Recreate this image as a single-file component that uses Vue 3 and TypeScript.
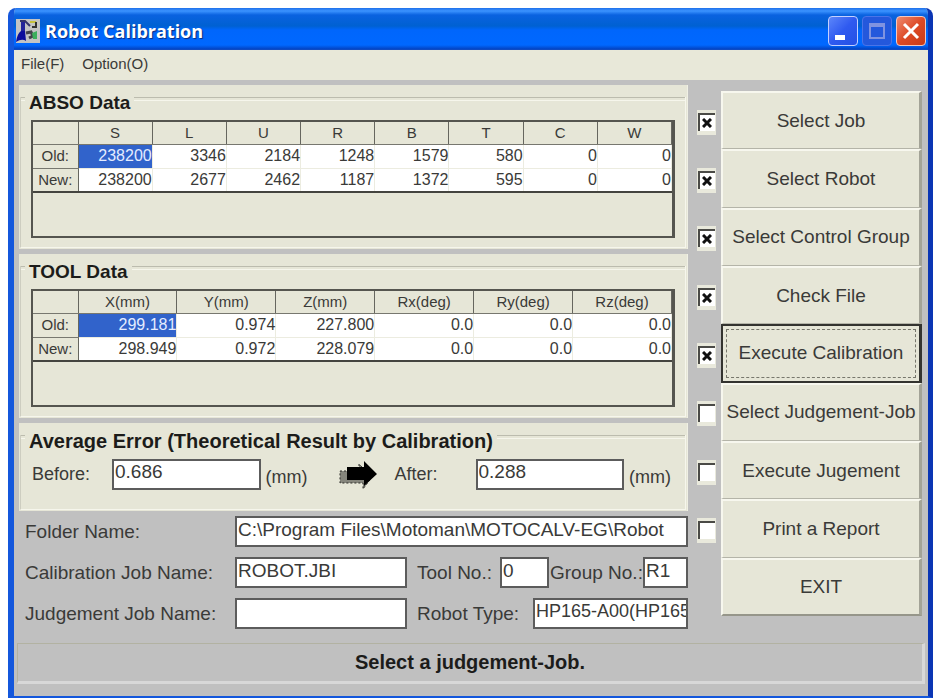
<script setup lang="ts">
import { reactive, ref } from 'vue'

interface DataGrid {
  title: string
  columns: string[]
  rows: { name: string; values: string[] }[]
}

interface Step {
  id: string
  label: string
  done?: boolean
}

const menus = ['File(F)', 'Option(O)']

const grids: DataGrid[] = [
  {
    title: 'ABSO Data',
    columns: ['S', 'L', 'U', 'R', 'B', 'T', 'C', 'W'],
    rows: [
      { name: 'Old:', values: ['238200', '3346', '2184', '1248', '1579', '580', '0', '0'] },
      { name: 'New:', values: ['238200', '2677', '2462', '1187', '1372', '595', '0', '0'] },
    ],
  },
  {
    title: 'TOOL Data',
    columns: ['X(mm)', 'Y(mm)', 'Z(mm)', 'Rx(deg)', 'Ry(deg)', 'Rz(deg)'],
    rows: [
      { name: 'Old:', values: ['299.181', '0.974', '227.800', '0.0', '0.0', '0.0'] },
      { name: 'New:', values: ['298.949', '0.972', '228.079', '0.0', '0.0', '0.0'] },
    ],
  },
]

const steps = reactive<Step[]>([
  { id: 'select-job', label: 'Select Job', done: true },
  { id: 'select-robot', label: 'Select Robot', done: true },
  { id: 'select-group', label: 'Select Control Group', done: true },
  { id: 'check-file', label: 'Check File', done: true },
  { id: 'execute-calibration', label: 'Execute Calibration', done: true },
  { id: 'select-judgement', label: 'Select Judgement-Job', done: false },
  { id: 'execute-judgement', label: 'Execute Jugement', done: false },
  { id: 'print-report', label: 'Print a Report', done: false },
  { id: 'exit', label: 'EXIT' },
])

const current = ref('execute-calibration')

const form = reactive({
  before: '0.686',
  after: '0.288',
  folder: 'C:\\Program Files\\Motoman\\MOTOCALV-EG\\Robot',
  job: 'ROBOT.JBI',
  judgement: '',
  tool: '0',
  group: 'R1',
  robot: 'HP165-A00(HP165-A00)',
})
</script>

<template>
  <div class="window">
    <header class="titlebar">
      <svg class="app-icon" viewBox="0 0 24 24" aria-hidden="true">
        <rect width="24" height="24" fill="#c4c4c4" />
        <path d="M7 3 V14" fill="none" stroke="#23239a" stroke-width="4" />
        <path d="M0 23 Q1 15 5 12 H9 L10 22 Q6 19 0 23 Z" fill="#0d0d9c" />
        <path d="M4 2 H9 L14 7" fill="none" stroke="#34346c" stroke-width="2" />
        <path d="M14 3 H20" stroke="#c6c03c" stroke-width="2" />
        <path d="M20 3 V8 H16" fill="none" stroke="#333" stroke-width="2" />
        <path d="M10 14 L15 13 L17 17 L13 19" fill="none" stroke="#44444c" stroke-width="3" />
        <path d="M16 14 L21 12 V20 H17 Z" fill="#3cae5c" />
      </svg>
      <h1>Robot Calibration</h1>
      <div class="caption-buttons">
        <button type="button" class="caption minimize" aria-label="Minimize">
          <svg viewBox="0 0 28 28"><rect x="6" y="18" width="10" height="5" fill="#fff" /></svg>
        </button>
        <button type="button" class="caption maximize" aria-label="Maximize">
          <svg viewBox="0 0 28 28">
            <path d="M7 8 H21 V21 H7 Z" fill="none" stroke="#8093e0" stroke-width="2" />
            <path d="M6 8 H22" stroke="#8093e0" stroke-width="4" />
          </svg>
        </button>
        <button type="button" class="caption close" aria-label="Close">
          <svg viewBox="0 0 28 28">
            <path d="M7 7 L21 21 M21 7 L7 21" fill="none" stroke="#fff" stroke-width="3" />
          </svg>
        </button>
      </div>
    </header>

    <nav class="menubar">
      <button v-for="menu in menus" :key="menu" type="button">{{ menu }}</button>
    </nav>

    <main class="client">
      <div class="workspace">
        <div class="panels">
          <section v-for="grid in grids" :key="grid.title" class="panel">
            <div class="frame">
              <h2>{{ grid.title }}</h2>
              <div class="sheet">
                <table>
                  <colgroup>
                    <col class="name-col" />
                    <col v-for="column in grid.columns" :key="column" />
                  </colgroup>
                  <thead>
                    <tr>
                      <th></th>
                      <th v-for="column in grid.columns" :key="column" scope="col">{{ column }}</th>
                    </tr>
                  </thead>
                  <tbody>
                    <tr v-for="(row, r) in grid.rows" :key="row.name">
                      <th scope="row">{{ row.name }}</th>
                      <td
                        v-for="(value, c) in row.values"
                        :key="c"
                        :class="{ selected: r === 0 && c === 0 }"
                      >{{ value }}</td>
                    </tr>
                  </tbody>
                </table>
              </div>
            </div>
          </section>

          <section class="panel">
            <div class="frame">
              <h2 class="long">Average Error (Theoretical Result by Calibration)</h2>
              <div class="errors">
                <label for="before" class="before-label">Before:</label>
                <input id="before" v-model="form.before" type="text" />
                <span class="unit">(mm)</span>
                <svg class="arrow" viewBox="0 0 42 32" aria-hidden="true">
                  <path
                    d="M1 13 H20 V6 L33 19 L24 31 V25 H1 Z"
                    fill="#85857c"
                    stroke="#2c2c28"
                    stroke-width="1"
                    stroke-dasharray="2 2"
                  />
                  <path d="M8 9 H25 V3 L38 16 L25 28 V22 H8 Z" fill="#000" />
                </svg>
                <label for="after" class="after-label">After:</label>
                <input id="after" v-model="form.after" type="text" />
                <span class="unit">(mm)</span>
              </div>
            </div>
          </section>

          <form class="details" @submit.prevent>
            <div class="row">
              <label for="folder" class="name">Folder Name:</label>
              <input id="folder" v-model="form.folder" type="text" class="grow" />
            </div>
            <div class="row">
              <label for="job" class="name">Calibration Job Name:</label>
              <input id="job" v-model="form.job" type="text" class="grow" />
              <div class="side">
                <label for="tool" class="tool-label">Tool No.:</label>
                <input id="tool" v-model="form.tool" type="text" class="tool" />
                <label for="group" class="group-label">Group No.:</label>
                <input id="group" v-model="form.group" type="text" class="grow" />
              </div>
            </div>
            <div class="row">
              <label for="judgement" class="name">Judgement Job Name:</label>
              <input id="judgement" v-model="form.judgement" type="text" class="grow" />
              <div class="side">
                <label for="robot" class="robot-label">Robot Type:</label>
                <input id="robot" v-model="form.robot" type="text" class="grow robot" />
              </div>
            </div>
          </form>
        </div>

        <div class="steps">
          <div v-for="step in steps" :key="step.id" class="step">
            <span v-if="step.done !== undefined" class="tick">
              <input v-model="step.done" type="checkbox" :aria-labelledby="step.id" />
              <svg v-if="step.done" viewBox="0 0 10 10" aria-hidden="true">
                <path d="M1 1 L9 9 M9 1 L1 9" stroke="#111" stroke-width="3" />
              </svg>
            </span>
            <button
              :id="step.id"
              type="button"
              :class="{ current: step.id === current }"
              @click="current = step.id"
            ><span>{{ step.label }}</span></button>
          </div>
        </div>
      </div>

      <p class="status" role="status">Select a judgement-Job.</p>
    </main>
  </div>
</template>

<style>
body {
  background: #fff;
}
</style>

<style scoped>
* {
  box-sizing: border-box;
}

.window {
  margin: 8px 5px 0 8px;
  border: solid #1457dc;
  border-width: 0 5px 2px 6px;
  border-right-color: #0a35b4;
  border-radius: 8px 8px 0 0;
  overflow: hidden;
  background: #c0c0c0;
  color: #3a3a38;
  font-family: "Liberation Sans", Arial, sans-serif;
  font-size: 19px;
}

button,
input {
  margin: 0;
  color: inherit;
  font: inherit;
}

h1,
h2,
p {
  margin: 0;
}

.titlebar {
  display: flex;
  align-items: center;
  gap: 5px;
  height: 42px;
  margin: 0 -5px 0 -6px;
  padding: 3px 7px 0 8px;
  background: linear-gradient(#1f70ea 0, #3b93ff 3px, #0a62e0 7px, #0061d2 18px, #0066fc 22px, #0068ff 37px, #0344c4 41px, #1a50c0 42px);
}

.app-icon {
  width: 24px;
  height: 24px;
}

.titlebar h1 {
  flex: 1;
  color: #fff;
  font-family: "Open Sans", "Noto Sans", sans-serif;
  font-size: 18px;
  font-weight: 700;
  line-height: 24px;
  text-shadow: 1px 1px 1px #0a2c80;
}

.caption-buttons {
  display: flex;
  gap: 4px;
}

.caption {
  width: 30px;
  height: 30px;
  padding: 0;
  border: 1px solid #c4d0ff;
  border-radius: 4px;
  background: linear-gradient(135deg, #5c86fa, #2f5af0 50%, #2450e4);
}

.caption svg {
  display: block;
  width: 28px;
  height: 28px;
}

.maximize {
  border-color: #4a74e8;
  background: #2458dc;
}

.close {
  border-color: #f4c8c0;
  background: linear-gradient(135deg, #ee8a70, #dd4a26 50%, #c83a18);
}

.menubar {
  display: flex;
  gap: 18px;
  height: 30px;
  padding: 0 7px 3px;
  background: #e8e8d9;
}

.menubar button {
  padding: 0;
  border: 0;
  background: none;
  font-size: 15px;
}

.client {
  padding: 5px 3px 12px;
}

.workspace {
  display: grid;
  grid-template-columns: minmax(0, 1fr) 225px;
  gap: 9px;
  padding: 0 3px 0 2px;
}

.panels {
  display: flex;
  flex-direction: column;
  gap: 5px;
}

.panel {
  padding: 12px 1px 1px;
  border-right: 1px solid #f0f0e4;
  background: #e6e6d7;
}

.frame {
  border: solid #cdcdc0;
  border-width: 0 1px 1px;
  border-right-color: #f6f6ec;
  border-bottom-color: #f6f6ec;
}

h2 {
  display: flex;
  gap: 4px;
  height: 23px;
  color: #1c1c1a;
  font-size: 19px;
  line-height: 12px;
  white-space: nowrap;
}

h2.long {
  font-size: 20px;
}

h2::before,
h2::after {
  content: "";
  height: 2px;
  border-top: 1px solid #bcbcae;
  border-bottom: 1px solid #f6f6ec;
}

h2::before {
  width: 4px;
}

h2::after {
  flex: 1;
}

.sheet {
  height: 118px;
  margin: 0 10px 9px;
  border: 2px solid #55554f;
  border-right-width: 3px;
}

table {
  width: 100%;
  border-collapse: collapse;
  border-bottom: 2px solid #44443f;
  table-layout: fixed;
}

.name-col {
  width: 45px;
}

th,
td {
  padding: 0;
  line-height: 20px;
  white-space: nowrap;
}

thead th {
  height: 22px;
}

tbody th,
td {
  height: 24px;
}

th {
  border-right: 1px solid #66665f;
  border-bottom: 1px solid #77776f;
  font-size: 15px;
  font-weight: 400;
  text-align: center;
}

td {
  border: solid #ecece0;
  border-width: 0 1px 1px 0;
  background: #fff;
  font-size: 16px;
  text-align: right;
}

td.selected {
  background: #3163cb;
  color: #e4ecff;
}

input[type="text"] {
  min-width: 0;
  height: 31px;
  padding: 0 0 4px 1px;
  border: 2px solid #5c5c5c;
  border-radius: 0;
  outline: 0;
  background: #fff;
}

.errors {
  display: flex;
  align-items: center;
  padding: 0 14px 19px 11px;
  font-size: 18px;
}

.errors input {
  flex: 1;
  font-size: 19px;
}

.before-label {
  width: 80px;
}

.after-label {
  width: 81px;
}

.unit {
  padding: 6px 0 0 5px;
}

.arrow {
  width: 42px;
  height: 32px;
  margin: 0 14px 0 31px;
}

.details {
  display: flex;
  flex-direction: column;
  gap: 10px;
}

.row,
.side {
  display: flex;
  align-items: center;
  white-space: nowrap;
}

.name {
  width: 216px;
  padding-left: 6px;
}

.grow {
  flex: 1;
}

.side {
  width: 281px;
  padding-left: 10px;
}

.tool-label {
  width: 83px;
}

.side .tool {
  width: 49px;
}

.group-label {
  width: 94px;
  padding-left: 1px;
}

.robot-label {
  width: 116px;
}

input.robot {
  font-size: 18px;
}

.steps {
  display: grid;
  grid-auto-rows: 1fr;
  padding: 6px 0 13px;
}

.step {
  display: grid;
  grid-template-columns: 19px 1fr;
  gap: 5px;
  align-items: center;
}

.tick {
  position: relative;
  display: flex;
  justify-content: center;
  margin-top: 4px;
  padding: 3px 1px 4px;
  background: #e9e9dc;
}

.tick input {
  width: 17px;
  height: 18px;
  border: solid #4a4a46;
  border-width: 2px 0 0 2px;
  outline: 0;
  background: #fff;
  appearance: none;
}

.tick svg {
  position: absolute;
  top: 8px;
  left: 5px;
  width: 10px;
  height: 10px;
  pointer-events: none;
}

.step button {
  grid-column: 2;
  align-self: stretch;
  padding: 0;
  border: solid #f7f7ee;
  border-width: 2px 3px 1px 2px;
  border-right-color: #a3a397;
  border-bottom-color: #b4b4a8;
  background: #e6e6d7;
  white-space: nowrap;
}

.step:last-child button {
  border-bottom: 2px solid #96968a;
}

.step button.current {
  padding: 3px;
  border: 2px solid #33332f;
  border-right-width: 3px;
}

.current span {
  display: grid;
  place-items: center;
  height: 100%;
  border: 1px dashed #77776c;
}

.status {
  height: 41px;
  margin-top: 14px;
  border: solid #b2b2a2;
  border-width: 1px 3px 3px 1px;
  border-right-color: #d8d8d8;
  border-bottom-color: #d8d8d8;
  color: #1c1c1a;
  font-size: 20px;
  font-weight: 700;
  line-height: 36px;
  text-align: center;
}
</style>
